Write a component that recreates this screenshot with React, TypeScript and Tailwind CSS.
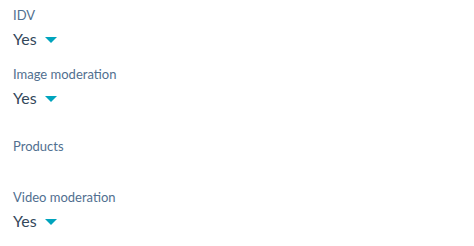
const Caret = () => (
  <svg width="12" height="6" viewBox="0 0 12 6" className="ml-[8px] mt-[1px]">
    <path d="M0 0 L12 0 L6 6 Z" fill="#00a4bd" />
  </svg>
)

function Field({ label, value, className }: { label: string; value?: string; className?: string }) {
  return (
    <div className={className}>
      <div className="text-[13px] leading-[16px] text-[#516f90]">{label}</div>
      {value && (
        <div className="mt-[4px] flex h-[24px] items-center text-[16px] text-[#33475b]">
          <span>{value}</span>
          <Caret />
        </div>
      )}
    </div>
  )
}

export default function App() {
  return (
    <div
      className="h-[246px] w-[474px] bg-white px-[13px] pt-[7px]"
      style={{ fontFamily: 'Lato, "Open Sans", sans-serif' }}
    >
      <Field label="IDV" value="Yes" />
      <Field label="Image moderation" value="Yes" className="mt-[15px]" />
      <Field label="Products" className="mt-[28px]" />
      <Field label="Video moderation" value="Yes" className="mt-[35px]" />
    </div>
  )
}
